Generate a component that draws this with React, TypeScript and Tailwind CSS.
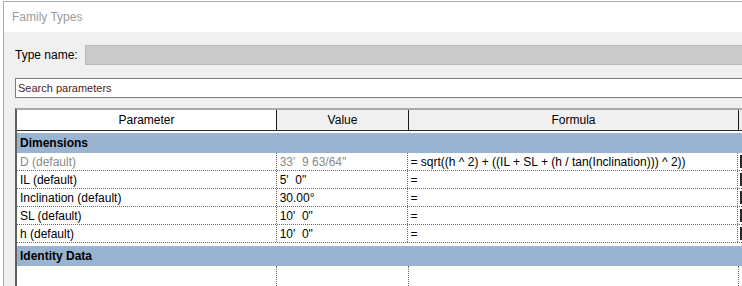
const rows = [
  { name: "D (default)", value: `33'  9 63/64"`, formula: "= sqrt((h ^ 2) + ((IL + SL + (h / tan(Inclination))) ^ 2))", muted: true },
  { name: "IL (default)", value: `5'  0"`, formula: "=" },
  { name: "Inclination (default)", value: "30.00°", formula: "=" },
  { name: "SL (default)", value: `10'  0"`, formula: "=" },
  { name: "h (default)", value: `10'  0"`, formula: "=" },
];

function GroupRow({ label }: { label: string }) {
  return (
    <div className="h-[20px] bg-[#99b4d1] flex items-center pl-[3px] font-bold text-black">
      {label}
    </div>
  );
}

function ParamRow({ name, value, formula, muted }: { name: string; value: string; formula: string; muted?: boolean }) {
  const tone = muted ? "text-[#8a8a8a]" : "text-black";
  return (
    <div className="flex h-[18px] border-b border-dotted border-[#6a6a6a]">
      <div className={`w-[259px] pl-[3px] flex items-center ${tone}`}>{name}</div>
      <div className={`w-[132px] border-l border-dotted border-[#6a6a6a] pl-[3px] flex items-center whitespace-pre ${tone}`}>
        {value}
      </div>
      <div className="w-[330px] border-l border-dotted border-[#6a6a6a] pl-[2px] flex items-center text-black whitespace-pre">
        {formula}
      </div>
      <div className="flex-1 border-l border-dotted border-[#6a6a6a] flex items-center">
        <div className="ml-[2px] w-[2px] h-[13px] bg-[#2a2a2a]" />
      </div>
    </div>
  );
}

export default function App() {
  return (
    <div
      className="w-[742px] h-[286px] overflow-hidden bg-white pl-[3px] pt-[1px] text-[12px] leading-none"
      style={{ fontFamily: '"Liberation Sans", "Noto Sans", sans-serif' }}
    >
      <div className="h-full border-l border-t border-[#adadad] flex flex-col">
        <div className="h-[30px] shrink-0 bg-white flex items-center pl-[8px] text-[#9b9b9b]">Family Types</div>
        <div className="flex-1 bg-[#f0f0f0] pl-[11px] pt-[13px] flex flex-col">
          <div className="flex items-center h-[20px]">
            <span className="w-[70px] text-black">Type name:</span>
            <div className="flex-1 h-[20px] bg-[#cbcbcb] border border-r-0 border-[#b8b8b8]" />
          </div>
          <div className="mt-[13px] h-[20px] bg-white border border-r-0 border-[#7a7a7a] flex items-center pl-[2px] text-[11px] text-[#4a2424]">
            Search parameters
          </div>
          <div className="mt-[10px] flex-1 bg-white border-l-2 border-t-2 border-l-[#5f5f5f] border-t-[#a9a9a9]">
            <div className="flex h-[21px] border-b border-[#2a2a2a] text-black">
              <div className="w-[259px] bg-white flex items-center justify-center">Parameter</div>
              <div className="w-[132px] bg-[#f0f0f0] border-l border-[#1a1a1a] flex items-center justify-center">Value</div>
              <div className="w-[330px] bg-[#f0f0f0] border-l border-[#1a1a1a] flex items-center justify-center">Formula</div>
              <div className="flex-1 bg-[#f0f0f0] border-l border-[#1a1a1a]" />
            </div>
            <div className="mt-[2px]">
              <GroupRow label="Dimensions" />
            </div>
            {rows.map((r) => (
              <ParamRow key={r.name} {...r} />
            ))}
            <div className="mt-[3px]">
              <GroupRow label="Identity Data" />
            </div>
            <div className="flex h-[30px]">
              <div className="w-[259px]" />
              <div className="w-[132px] border-l border-dotted border-[#6a6a6a]" />
              <div className="w-[330px] border-l border-dotted border-[#6a6a6a]" />
              <div className="flex-1 border-l border-dotted border-[#6a6a6a]" />
            </div>
          </div>
        </div>
      </div>
    </div>
  );
}
